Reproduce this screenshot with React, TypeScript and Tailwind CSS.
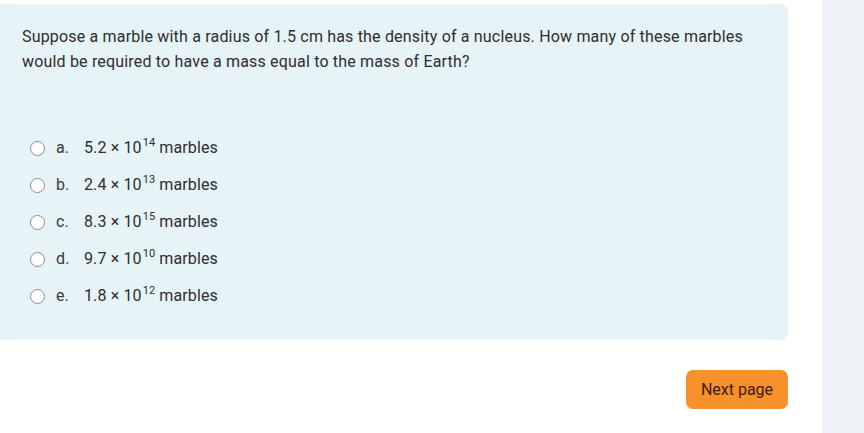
import React from "react";

interface Choice {
	letter: string;
	base: string;
	exp: string;
}

const choices: Choice[] = [
	{ letter: "a.", base: "5.2", exp: "14" },
	{ letter: "b.", base: "2.4", exp: "13" },
	{ letter: "c.", base: "8.3", exp: "15" },
	{ letter: "d.", base: "9.7", exp: "10" },
	{ letter: "e.", base: "1.8", exp: "12" },
];

const App: React.FC = () => {
	return (
		<div
			className="flex w-[864px] h-[433px] bg-white text-[#2e2e2e] overflow-hidden"
			style={{ fontFamily: "Roboto, 'Liberation Sans', sans-serif" }}
		>
			<div className="w-[822px] flex flex-col">
				<div className="mt-[4px] w-[788px] h-[336px] bg-[#e6f3f7] rounded-r-[8px] rounded-l-[4px] pl-[22px] pt-[20px]">
					<p className="text-[16px] leading-[25px] tracking-[0.18px] w-[750px]">
						Suppose a marble with a radius of 1.5 cm has the density of a nucleus. How many of these marbles
						would be required to have a mass equal to the mass of Earth?
					</p>
					<div className="mt-[63px] flex flex-col gap-[15px]">
						{choices.map((c) => (
							<label key={c.letter} className="flex items-center h-[22px] text-[16px] tracking-[0.12px]">
								<span className="ml-[8px] w-[15px] h-[15px] rounded-full border border-[#8a8a8a] bg-white" />
								<span className="ml-[11px] w-[28px] text-[#3a3a3a]">{c.letter}</span>
								<span>
									{c.base} × 10<sup className="text-[11px] -top-[7px] ml-[1px]">{c.exp}</sup> marbles
								</span>
							</label>
						))}
					</div>
				</div>
				<div className="flex justify-end w-[788px] mt-[30px]">
					<button className="w-[102px] h-[39px] rounded-[7px] bg-[#f6912b] text-[16px] text-[#3b1d08]">
						Next page
					</button>
				</div>
			</div>
			<div className="flex-1 bg-[#eef2f6]" />
		</div>
	);
};

export default App;
